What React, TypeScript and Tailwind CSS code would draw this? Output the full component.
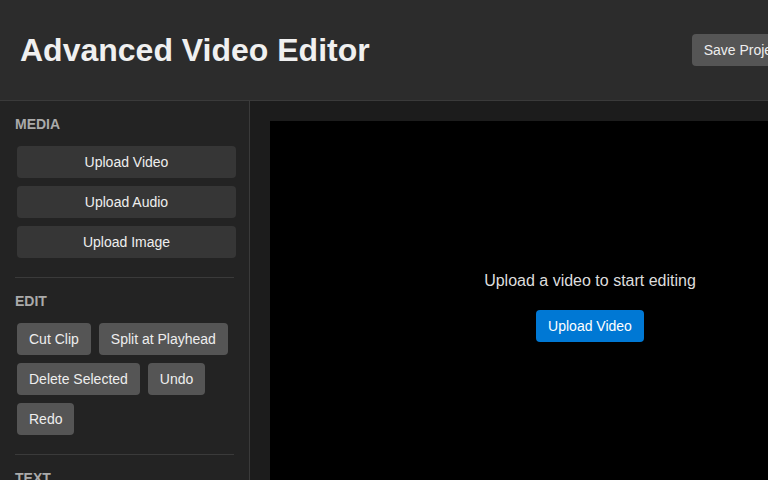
import React from 'react'

const mediaButtons = ['Upload Video', 'Upload Audio', 'Upload Image']
const editButtons = ['Cut Clip', 'Split at Playhead', 'Delete Selected', 'Undo', 'Redo']

function SectionTitle({ children }: { children: React.ReactNode }) {
  return (
    <h3 className="text-[14px] leading-[16px] font-bold uppercase text-[#aaaaaa] mb-[12px]">
      {children}
    </h3>
  )
}

export default function App() {
  return (
    <div
      className="h-[480px] w-[768px] overflow-hidden bg-[#1c1c1c] text-[#eeeeee]"
      style={{ fontFamily: '"Liberation Sans", Arial, sans-serif' }}
    >
      <div className="w-[815px] flex flex-col">
        <header className="h-[101px] flex items-center justify-between px-5 bg-[#2c2c2c] border-b border-[#3a3a3a]">
          <h1 className="text-[32px] font-bold text-[#f0f0f0]">Advanced Video Editor</h1>
          <button className="h-8 px-3 rounded bg-[#555555] text-[14px] text-[#eeeeee] whitespace-nowrap">
            Save Project
          </button>
        </header>

        <div className="flex">
          <aside className="w-[250px] h-[400px] shrink-0 bg-[#232323] border-r border-[#3a3a3a] px-[15px] pt-[15px]">
            <section className="pb-[13px] border-b border-[#3a3a3a]">
              <SectionTitle>Media</SectionTitle>
              <div className="flex flex-col">
                {mediaButtons.map((label) => (
                  <button
                    key={label}
                    className="w-[219px] h-8 mx-[2px] mt-[2px] mb-[6px] rounded bg-[#363636] text-[14px] text-[#eeeeee]"
                  >
                    {label}
                  </button>
                ))}
              </div>
            </section>

            <section className="pt-[15px] pb-[13px] border-b border-[#3a3a3a]">
              <SectionTitle>Edit</SectionTitle>
              <div className="flex flex-wrap">
                {editButtons.map((label) => (
                  <button
                    key={label}
                    className="h-8 px-3 ml-[2px] mt-[2px] mb-[6px] mr-[6px] rounded bg-[#555555] text-[14px] text-[#eeeeee]"
                  >
                    {label}
                  </button>
                ))}
              </div>
            </section>

            <section className="pt-[15px]">
              <SectionTitle>Text</SectionTitle>
            </section>
          </aside>

          <main className="flex-1 p-5 min-w-0">
            <div className="w-[640px] h-[372px] shrink-0 bg-black flex flex-col items-center justify-center">
              <p className="text-[16px] leading-[18px] text-[#dddddd] mb-5">
                Upload a video to start editing
              </p>
              <button className="h-8 px-3 rounded bg-[#0078d4] text-[14px] text-white">
                Upload Video
              </button>
            </div>
          </main>
        </div>
      </div>
    </div>
  )
}
